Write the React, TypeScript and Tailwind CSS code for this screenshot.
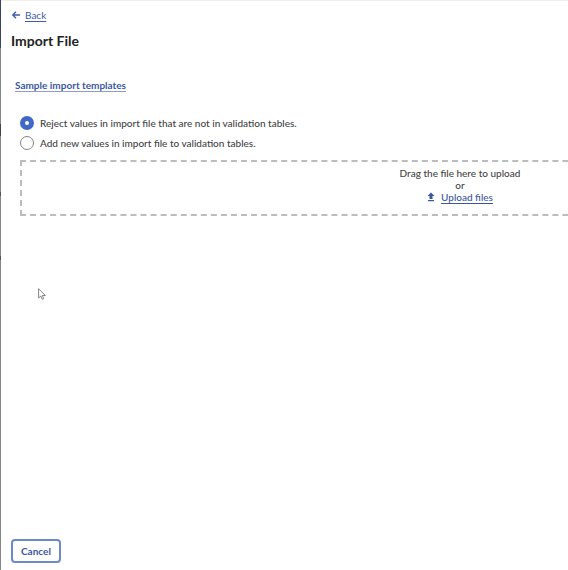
import { useState } from 'react';

const options = [
  { value: 'reject', label: 'Reject values in import file that are not in validation tables.' },
  { value: 'add', label: 'Add new values in import file to validation tables.' },
];

export default function App() {
  const [mode, setMode] = useState('reject');

  return (
    <div className="relative flex min-h-screen overflow-hidden bg-white font-['Lato','Liberation_Sans',sans-serif] text-[#444]">
      {/* Edge of the page behind the panel */}
      <div className="flex w-px shrink-0 flex-col bg-[#858585]">
        <div className="h-12 bg-[#3c4262]" />
        <div className="mt-19 h-3 bg-[#444]" />
        <div className="mt-14 h-1 bg-[#555]" />
        <div className="mt-15 h-1 bg-[#555]" />
      </div>

      <main className="flex min-w-0 flex-1 flex-col border-t border-[#eeeeee] px-2.5 pt-1.5 pb-[7px]">
        <a href="#back" className="flex items-center gap-1 self-start text-[10px] leading-4 text-[#3f5aa6]">
          <svg viewBox="0 0 10 10" className="h-2.5 w-2.5" fill="none" stroke="currentColor" strokeWidth="1.3">
            <path d="M9 5H1.8M5 1.8L1.8 5L5 8.2" />
          </svg>
          <span className="underline underline-offset-2">Back</span>
        </a>

        <h1 className="mt-2 text-[14px] leading-5 font-bold text-[#222]">Import File</h1>

        <a
          href="#templates"
          className="mt-7 ml-1 self-start border-b border-[#8c9dcc] text-[10px] leading-3 font-bold text-[#3c579f]"
        >
          Sample import templates
        </a>

        <div className="mt-6 ml-[9px] flex flex-col gap-1.5">
          {options.map((option) => (
            <label key={option.value} className="flex items-center gap-1.5 text-[10px] leading-3.5 font-medium">
              <input
                type="radio"
                name="mode"
                value={option.value}
                checked={mode === option.value}
                onChange={() => setMode(option.value)}
                className="h-3.5 w-3.5 appearance-none rounded-full border border-[#858585] bg-white checked:border-[5px] checked:border-[#4169c4]"
              />
              {option.label}
            </label>
          ))}
        </div>

        {/* Drop zone */}
        <div className="mt-2.5 ml-[9px] flex h-14 w-[880px] shrink-0 flex-col items-center border-2 border-dashed border-[#bcbcbc] pt-[5px] text-[10px] leading-3 font-medium">
          <p>Drag the file here to upload</p>
          <p>or</p>
          <button type="button" className="flex items-center gap-1.5 text-[#3c579f]">
            <svg viewBox="0 0 8 10" className="h-2.5 w-2" fill="currentColor">
              <path d="M4 0.5L7.5 4H5.5V7H2.5V4H0.5ZM1 8H7V9.2H1Z" />
            </svg>
            <span className="underline underline-offset-2">Upload files</span>
          </button>
        </div>

        <button
          type="button"
          className="mt-auto h-6 self-start rounded border-2 border-[#6d88cb] px-2 text-[10px] leading-4 font-bold text-[#3c579f]"
        >
          Cancel
        </button>
      </main>

      {/* Mouse pointer */}
      <svg viewBox="0 0 8 12" className="absolute top-72 left-9.5 h-3 w-2" fill="white" stroke="#666" strokeWidth="0.8">
        <path d="M0.6 0.8V10L2.8 8L4.2 11.3L5.7 10.6L4.3 7.5H7.4Z" />
      </svg>
    </div>
  );
}
